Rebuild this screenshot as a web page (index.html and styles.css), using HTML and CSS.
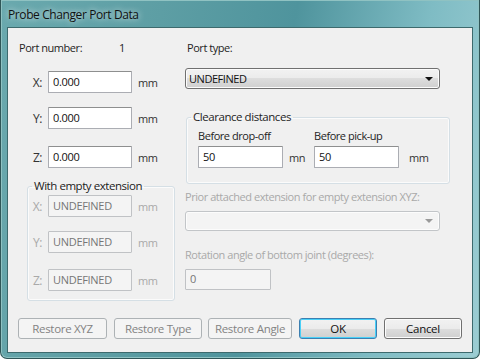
FILE: index.html
```html
<!DOCTYPE html>
<html lang="en">
<head>
  <meta charset="UTF-8">
  <title>Probe Changer Port Data</title>
  <link rel="stylesheet" href="styles.css">
</head>
<body>
  <div class="window">
    <div class="titlebar">Probe Changer Port Data</div>
    <div class="client">
      <div class="columns">
        <div class="col-left">
          <div class="info-row">
            <span class="info-label">Port number:</span>
            <span>1</span>
          </div>
          <div class="field-row row-x">
            <label class="axis">X:</label>
            <input class="box" type="text" value="0.000">
            <span class="unit">mm</span>
          </div>
          <div class="field-row row-y">
            <label class="axis">Y:</label>
            <input class="box" type="text" value="0.000">
            <span class="unit">mm</span>
          </div>
          <div class="field-row row-z">
            <label class="axis">Z:</label>
            <input class="box" type="text" value="0.000">
            <span class="unit">mm</span>
          </div>

          <fieldset class="group group-empty">
            <legend>With empty extension</legend>
            <div class="field-row off row-ex">
              <label class="axis">X:</label>
              <input class="box" type="text" value="UNDEFINED" disabled>
              <span class="unit">mm</span>
            </div>
            <div class="field-row off row-ey">
              <label class="axis">Y:</label>
              <input class="box" type="text" value="UNDEFINED" disabled>
              <span class="unit">mm</span>
            </div>
            <div class="field-row off row-ez">
              <label class="axis">Z:</label>
              <input class="box" type="text" value="UNDEFINED" disabled>
              <span class="unit">mm</span>
            </div>
          </fieldset>
        </div>

        <div class="col-right">
          <div class="info-row port-type">Port type:</div>
          <div class="combo">
            <span>UNDEFINED</span>
            <span class="arrow"></span>
          </div>

          <fieldset class="group group-clear">
            <legend>Clearance distances</legend>
            <div class="clear-row">
              <div class="clear-cell">
                <div class="clear-label">Before drop-off</div>
                <div class="clear-input">
                  <input class="box" type="text" value="50">
                  <span class="unit">mn</span>
                </div>
              </div>
              <div class="clear-cell">
                <div class="clear-label">Before pick-up</div>
                <div class="clear-input">
                  <input class="box" type="text" value="50">
                  <span class="unit unit-wide">mm</span>
                </div>
              </div>
            </div>
          </fieldset>

          <div class="off-label prior">Prior attached extension for empty extension XYZ:</div>
          <div class="combo combo-off">
            <span></span>
            <span class="arrow"></span>
          </div>

          <div class="off-label rotation">Rotation angle of bottom joint (degrees):</div>
          <input class="box box-angle" type="text" value="0" disabled>
        </div>
      </div>

      <div class="buttons">
        <button class="btn btn-xyz" disabled>Restore XYZ</button>
        <button class="btn btn-type" disabled>Restore Type</button>
        <button class="btn btn-angle" disabled>Restore Angle</button>
        <button class="btn btn-ok">OK</button>
        <button class="btn btn-cancel">Cancel</button>
      </div>
    </div>
  </div>
</body>
</html>
```

FILE: styles.css
```css
html, body { margin: 0; padding: 0; background: #fff; }
body { font-family: "Open Sans", "DejaVu Sans", sans-serif; font-size: 11px; letter-spacing: -0.45px; color: #1e1e1e; }

.window {
  width: 480px; height: 359px; box-sizing: border-box;
  padding: 0 6px 6px 6px;
  border: 1px solid #2f5658; border-top: 0;
  border-radius: 0 0 7px 7px;
  background: linear-gradient(100deg, #6aa9ae 0%, #5d9ea4 30%, #4f949d 55%, #7fbcc4 80%, #9ccdd3 100%);
  box-shadow: inset 0 0 0 1px #8fc2c2;
}
.titlebar { height: 27px; line-height: 29px; padding-left: 1px; font-size: 12px; letter-spacing: -0.4px; color: #111; text-shadow: 0 0 6px rgba(255,255,255,0.9); }

.client {
  height: 324px;
  border: 1px solid #3d6a6d;
  background: #f0f0f0;
}

.columns { display: flex; height: 283px; }
.col-left { width: 166px; padding: 12px 0 0 11px; }
.col-right { width: 264px; padding: 12px 0 0 0; }

.info-row { height: 16px; line-height: 16px; display: flex; }
.info-label { width: 100px; }
.port-type { padding-left: 2px; }

.field-row { display: flex; align-items: center; height: 22px; }
.row-x { margin-top: 15px; }
.row-y { margin-top: 14px; }
.row-z { margin-top: 17px; }
.axis { width: 29px; text-align: right; padding-right: 6px; box-sizing: border-box; font-size: 12px; color: #333; }
.unit { padding-left: 6px; font-size: 11px; color: #333; }

.box {
  width: 84px; height: 22px; box-sizing: border-box; margin: 0;
  border: 1px solid #abadb3; border-top-color: #8e8f8f;
  background: #fff; padding: 0 4px 2px 4px;
  font: 11px "Open Sans", "DejaVu Sans", sans-serif; letter-spacing: -0.3px; color: #111;
  border-radius: 1px;
}
.box:disabled { background: #f4f4f4; border-color: #c0c2c5; color: #767676; }

.group {
  margin: 0; padding: 0; min-width: 0;
  border: 1px solid #d5dfe5; border-radius: 3px;
  box-shadow: inset 0 0 0 1px #fbfbfb;
}
.group legend { padding: 0 2px; margin-left: 4px; line-height: 14px; font-size: 11.5px; }

.group-empty { margin: 11px 0 0 8px; width: 148px; height: 122px; box-sizing: border-box; padding: 0; }
.group-empty legend { color: #222; }
.group-empty .axis { width: 20px; }
.row-ex { margin-top: 2px; }
.row-ey { margin-top: 14px; }
.row-ez { margin-top: 16px; }
.off .axis, .off .unit { color: #a9a9a9; }

.combo {
  width: 255px; height: 21px; box-sizing: border-box; margin-top: 12px;
  border: 1px solid #707070; border-radius: 3px;
  background: linear-gradient(#f2f2f2 0%, #ebebeb 50%, #dddddd 50%, #cfcfcf 100%);
  box-shadow: inset 0 0 0 1px #fcfcfc;
  display: flex; align-items: center; justify-content: space-between;
  padding: 0 6px 0 3px; font-size: 11px; color: #111;
}
.arrow { width: 0; height: 0; border-left: 4px solid transparent; border-right: 4px solid transparent; border-top: 4px solid #111; }
.combo-off { background: #f4f4f4; border-color: #c2c5c8; margin-top: 7px; height: 20px; }
.combo-off .arrow { border-top-color: #9a9a9a; }

.group-clear { margin: 21px 0 0 1px; width: 264px; height: 74px; box-sizing: border-box; padding: 0 0 0 11px; }
.group-clear legend { color: #1e1e1e; margin-left: -7px; }
.clear-row { display: flex; }
.clear-cell { width: 116px; }
.clear-label { line-height: 14px; margin-top: 5px; }
.clear-input { display: flex; align-items: center; margin-top: 3px; }
.clear-input .box { width: 85px; }
.unit-wide { padding-left: 10px; }

.off-label { color: #a9a9a9; line-height: 14px; }
.prior { margin-top: 6px; }
.rotation { margin-top: 17px; }
.box-angle { width: 86px; height: 21px; margin-top: 7px; display: block; }

.buttons { display: flex; padding-left: 10px; margin-top: 7px; }
.btn {
  height: 21px; box-sizing: border-box; margin: 0 7px 0 0; padding: 0;
  border: 1px solid #707070; border-radius: 3px;
  background: linear-gradient(#f2f2f2 0%, #ebebeb 50%, #dddddd 50%, #cfcfcf 100%);
  box-shadow: inset 0 0 0 1px #fcfcfc;
  font: 11.5px "Open Sans", "DejaVu Sans", sans-serif; letter-spacing: -0.3px; color: #111;
}
.btn:disabled { background: #f4f4f4; border-color: #adb2b5; color: #838383; box-shadow: none; }
.btn-xyz { width: 89px; }
.btn-type { width: 88px; margin-right: 6px; }
.btn-angle { width: 84px; }
.btn-ok { width: 78px; border-color: #3c7fb1; box-shadow: inset 0 0 0 1px #48d0f8; }
.btn-cancel { width: 78px; }
```
